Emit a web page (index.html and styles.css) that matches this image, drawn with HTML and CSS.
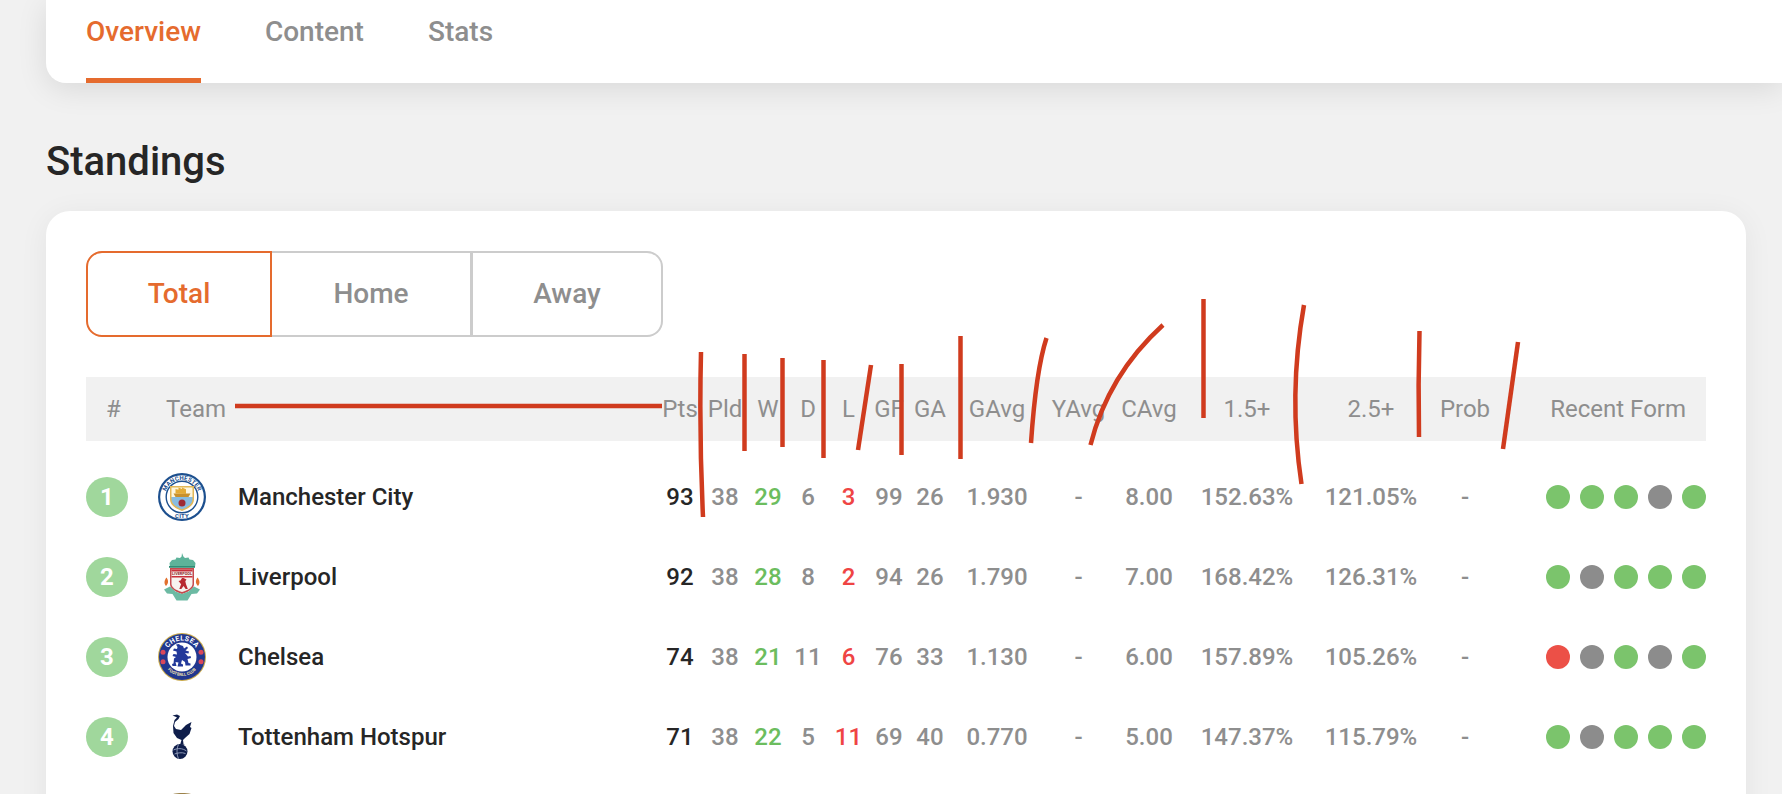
FILE: index.html
```html
<!DOCTYPE html>
<html lang="en">
<head>
    <meta charset="UTF-8">
    <meta name="viewport" content="width=device-width, initial-scale=1.0">
    <title>League Standings</title>
    <link rel="stylesheet" href="styles.css">
</head>
<body>
    <nav class="tabs-card">
        <a class="tab active">Overview</a>
        <a class="tab">Content</a>
        <a class="tab">Stats</a>
    </nav>

    <h1 class="section-title">Standings</h1>

    <section class="standings-card">
        <div class="switcher">
            <button class="switch active">Total</button>
            <button class="switch">Home</button>
            <button class="switch">Away</button>
        </div>

        <table class="standings">
            <colgroup>
                <col class="c-rank"><col class="c-team"><col class="c-pts"><col class="c-pld"><col class="c-sm"><col class="c-sm"><col class="c-l"><col class="c-sm"><col class="c-ga"><col class="c-gavg"><col class="c-yavg"><col class="c-cavg"><col class="c-o15"><col class="c-o25"><col class="c-prob"><col class="c-form">
            </colgroup>
            <thead>
                <tr>
                    <th class="rank-head">#</th>
                    <th class="team-head">Team</th>
                    <th>Pts</th><th>Pld</th><th>W</th><th>D</th><th>L</th><th>GF</th><th>GA</th>
                    <th>GAvg</th><th>YAvg</th><th>CAvg</th><th>1.5+</th><th>2.5+</th><th>Prob</th>
                    <th class="form-head">Recent Form</th>
                </tr>
            </thead>
            <tbody>
                <tr>
                    <td><span class="rank">1</span></td>
                    <td>
                        <div class="team">
                            <svg class="logo" viewBox="0 0 48 48">
                                <defs><path id="mc-top" d="M7 24a17 17 0 0 1 34 0"/></defs>
                                <circle cx="24" cy="24" r="24" fill="#1c4f8e"/>
                                <circle cx="24" cy="24" r="21.800" fill="#fff"/>
                                <circle cx="24" cy="24" r="15.800" fill="none" stroke="#1c4f8e" stroke-width="1.400"/>
                                <text class="crest-text mc"><textPath href="#mc-top" startOffset="50%" text-anchor="middle">MANCHESTER</textPath></text>
                                <text class="crest-text mc" x="24" y="44.500" text-anchor="middle">CITY</text>
                                <path d="M12 13h24v13c0 6-5 9.500-12 12-7-2.500-12-6-12-12z" fill="#e3b857"/>
                                <path d="M13.500 14.500h21v9.500h-21z" fill="#fdf6de"/>
                                <path d="M13.500 24h21v2c0 5-4.500 8-10.500 10.300-6-2.300-10.500-5.300-10.500-10.300z" fill="#88bce0"/>
                                <path d="M15.500 20.500h17l-2 3.500h-13z" fill="#c8902c"/>
                                <path d="M17.500 20.500v-4.500l3 .8v-2.300l3.500 1.500v-1.500l4 1.800v4.700z" fill="#e3ab36"/>
                                <circle cx="24" cy="30" r="3.500" fill="#9e2a33"/>
                            </svg>
                            <span class="team-name">Manchester City</span>
                        </div>
                    </td>
                    <td class="pts">93</td><td>38</td><td class="won">29</td><td>6</td><td class="lost">3</td><td>99</td><td>26</td>
                    <td>1.930</td><td>-</td><td>8.00</td><td>152.63%</td><td>121.05%</td><td>-</td>
                    <td><div class="form"><i class="dot w"></i><i class="dot w"></i><i class="dot w"></i><i class="dot d"></i><i class="dot w"></i></div></td>
                </tr>
                <tr>
                    <td><span class="rank">2</span></td>
                    <td>
                        <div class="team">
                            <svg class="logo" viewBox="0 0 48 48">
                                <path d="M24 0l1.400 3.500 1.600 1.500 3.500-.5 1 2 3.500.5 2.500 3-.5 4h-25l-.5-4 2.500-3 3.500-.5 1-2 3.500.5 1.600-1.500z" fill="#5db39a"/>
                                <path d="M11 13h26v1.800h-26z" fill="#2f8d75"/>
                                <path d="M12 15h24v16c0 4-4 7.500-12 10-8-2.500-12-6-12-10z" fill="#c64a4e"/>
                                <path d="M13.500 16.500h21v14.500c0 3-3.500 6-10.500 8-7-2-10.500-5-10.500-8z" fill="#f7f3ef"/>
                                <path d="M13.500 16.500h21v2h-21zM13.500 23h21v1.500h-21z" fill="#c8303a"/>
                                <text class="crest-text lfc" x="24" y="22.200" text-anchor="middle">LIVERPOOL</text>
                                <path d="M25.500 25l3 1.500-1.200 1.800.7 3 1.800 4.700h-2.200l-2-3-2.300 3h-2l1.800-4.700-1.600-2-1-1.300 2-.5 1.500-2.500z" fill="#b82a30"/>
                                <path d="M8.500 24.500c-2.300 3-2.800 6-.5 8.500 2.500-2.300 2.800-5.500.5-8.500zM39.500 24.500c-2.300 3-2 6.200.5 8.500 2.300-2.500 1.800-5.500-.5-8.500z" fill="#e2702e"/>
                                <path d="M6 36.500l6-3 5.500 5 6.500 2.500 6.500-2.500 5.500-5 6 3-3 4-5.500.5-4 6.500h-11l-4-6.500-5.500-.5z" fill="#6cbaa3"/>
                            </svg>
                            <span class="team-name">Liverpool</span>
                        </div>
                    </td>
                    <td class="pts">92</td><td>38</td><td class="won">28</td><td>8</td><td class="lost">2</td><td>94</td><td>26</td>
                    <td>1.790</td><td>-</td><td>7.00</td><td>168.42%</td><td>126.31%</td><td>-</td>
                    <td><div class="form"><i class="dot w"></i><i class="dot d"></i><i class="dot w"></i><i class="dot w"></i><i class="dot w"></i></div></td>
                </tr>
                <tr>
                    <td><span class="rank">3</span></td>
                    <td>
                        <div class="team">
                            <svg class="logo" viewBox="0 0 48 48">
                                <defs><path id="cfc-top" d="M7.500 24a16.500 16.500 0 0 1 33 0"/><path id="cfc-bot" d="M5 24a19 19 0 0 0 38 0"/></defs>
                                <circle cx="24" cy="24" r="24" fill="#c9a94a"/>
                                <circle cx="24" cy="24" r="23" fill="#21378f"/>
                                <circle cx="24" cy="24" r="14.500" fill="#fff"/>
                                <text class="crest-text cfc"><textPath href="#cfc-top" startOffset="50%" text-anchor="middle">CHELSEA</textPath></text>
                                <text class="crest-text cfc-sm"><textPath href="#cfc-bot" startOffset="50%" text-anchor="middle">FOOTBALL CLUB</textPath></text>
                                <circle cx="5" cy="19.300" r="2.500" fill="#d9475a"/>
                                <circle cx="43" cy="19.300" r="2.500" fill="#d9475a"/>
                                <circle cx="5" cy="28.700" r="2.500" fill="#d9475a"/>
                                <circle cx="43" cy="28.700" r="2.500" fill="#d9475a"/>
                                <path d="M22 12l3 1 1 2.500 3-2 1 1.500-2.500 2.500 3.500 1-.5 2-3.500-.5 3 3.500 2.500-.5.500 2-3.500 1 1 4 2 .5v2h-5l-.5-3.500-3-2-1 3.500 2 1v2h-5.500l1-4-3-.5 1 4h-4l-.5-2 1.500-.5.500-5 2-1.500-3.500-1 1-2 3.500.5-.5-3-3.500-1 1-2 3 .5.500-2-1.500-2.500 3-.5z" fill="#23399a"/>
                            </svg>
                            <span class="team-name">Chelsea</span>
                        </div>
                    </td>
                    <td class="pts">74</td><td>38</td><td class="won">21</td><td>11</td><td class="lost">6</td><td>76</td><td>33</td>
                    <td>1.130</td><td>-</td><td>6.00</td><td>157.89%</td><td>105.26%</td><td>-</td>
                    <td><div class="form"><i class="dot l"></i><i class="dot d"></i><i class="dot w"></i><i class="dot d"></i><i class="dot w"></i></div></td>
                </tr>
                <tr>
                    <td><span class="rank">4</span></td>
                    <td>
                        <div class="team">
                            <svg class="logo" viewBox="0 0 48 48">
                                <path d="M14.500 2.500l4.500-1 3 1.500-1.500 3-3.500 3-1 4 2 3 5 1 5-5 5.500-3-1.500 5 1.500 1-2 6-4.500 4-2 2 .5 4 1.500.5-5 .5 1.500-5-4.500-2-3.500-5-.5-7 1.500-6 2.500-2.500-2-1z" fill="#0f1e4b"/>
                                <circle cx="22" cy="38.500" r="7.500" fill="#0f1e4b"/>
                                <path d="M15.500 37c4-2 9-2 13 1M16.500 41c3-1 7-2 11-.5M20.500 31.500c-2 4-2 10 0 14" fill="none" stroke="#9aa5c2" stroke-width=".9"/>
                            </svg>
                            <span class="team-name">Tottenham Hotspur</span>
                        </div>
                    </td>
                    <td class="pts">71</td><td>38</td><td class="won">22</td><td>5</td><td class="lost">11</td><td>69</td><td>40</td>
                    <td>0.770</td><td>-</td><td>5.00</td><td>147.37%</td><td>115.79%</td><td>-</td>
                    <td><div class="form"><i class="dot w"></i><i class="dot d"></i><i class="dot w"></i><i class="dot w"></i><i class="dot w"></i></div></td>
                </tr>
                <tr>
                    <td></td>
                    <td>
                        <div class="team">
                            <svg class="logo" viewBox="0 0 48 48">
                                <path d="M15 1c5-1.300 13-1.300 18 0l-2 6h-14z" fill="#9c824a"/>
                            </svg>
                        </div>
                    </td>
                    <td colspan="14"></td>
                </tr>
            </tbody>
        </table>
    </section>

    <!-- pen marks drawn on top of the screenshot -->
    <svg class="marks" viewBox="0 0 1782 794">
        <path d="M235 406H662"/>
        <path d="M701 352Q699 433 703 517"/>
        <path d="M744.500 354V451"/>
        <path d="M782.500 358V447"/>
        <path d="M823.500 360V458"/>
        <path d="M871 365L858 450"/>
        <path d="M901.500 364V455"/>
        <path d="M960.500 336V459"/>
        <path d="M1046.500 338Q1036 370 1031 443"/>
        <path d="M1163 325Q1108 375 1090.500 445"/>
        <path d="M1203.500 299V418"/>
        <path d="M1304 305Q1288 395 1301.500 484"/>
        <path d="M1419.500 331Q1418 385 1419 437"/>
        <path d="M1518 342L1503 449"/>
    </svg>
</body>
</html>
```

FILE: styles.css
```css
html, body {
    height: 100%;
}
body {
    margin: 0;
    overflow: hidden;
    position: relative;
    background-color: #f1f1f1;
    color: #262626;
    font-family: Roboto, "Liberation Sans", sans-serif;
}
.tabs-card {
    display: flex;
    gap: 64px;
    height: 83px;
    margin-left: 46px;
    padding-left: 40px;
    box-sizing: border-box;
    background-color: #fff;
    border-bottom-left-radius: 20px;
    box-shadow: 0 6px 30px rgba(0, 0, 0, 0.1);
}
.tab {
    height: 83px;
    box-sizing: border-box;
    padding-top: 16px;
    font-size: 28px;
    line-height: 32px;
    font-weight: 500;
    color: #8e8e8e;
}
.tab.active {
    color: #e56b2e;
    border-bottom: 5px solid #e56b2e;
}
.section-title {
    margin: 59px 0 29px 46px;
    font-size: 40px;
    line-height: 40px;
    font-weight: 500;
}
.standings-card {
    margin: 0 36px 0 46px;
    padding: 40px;
    height: 700px;
    background-color: #fff;
    border-radius: 24px;
    box-shadow: 0 4px 30px rgba(0, 0, 0, 0.06);
}
.switcher {
    display: flex;
    width: 577px;
    height: 86px;
    box-sizing: border-box;
}
.switch {
    padding: 0 0 2px;
    background: #fff;
    border: 2px solid #ccc;
    border-left: 0;
    font-family: inherit;
    font-size: 28px;
    font-weight: 500;
    color: #8e8e8e;
}
.switch:nth-child(1) {
    width: 186px;
    border: 2px solid #e56b2e;
    border-radius: 16px 0 0 16px;
    color: #e56b2e;
}
.switch:nth-child(2) {
    width: 201px;
    border-right: 3px solid #ccc;
}
.switch:nth-child(3) {
    width: 190px;
    border-radius: 0 16px 16px 0;
}
.standings {
    width: 1620px;
    margin-top: 40px;
    table-layout: fixed;
    border-collapse: collapse;
    font-size: 24px;
}
.c-rank { width: 72px; }
.c-team { width: 500px; }
.c-pts { width: 44px; }
.c-pld { width: 46px; }
.c-sm { width: 40px; }
.c-l { width: 41px; }
.c-ga { width: 42px; }
.c-gavg { width: 92px; }
.c-yavg { width: 71px; }
.c-cavg { width: 70px; }
.c-o15 { width: 126px; }
.c-o25 { width: 122px; }
.c-prob { width: 66px; }
.c-form { width: 208px; }
.standings th {
    height: 64px;
    padding: 0;
    background-color: #f1f1f1;
    font-weight: 400;
    color: #8e8e8e;
    white-space: nowrap;
}
.standings th.rank-head {
    padding-left: 20px;
    text-align: left;
}
.standings th.team-head {
    padding-left: 8px;
    text-align: left;
}
.standings th.form-head {
    padding-right: 20px;
    text-align: right;
}
.standings td {
    height: 80px;
    padding: 0;
    text-align: center;
    font-weight: 500;
    color: #8e8e8e;
    white-space: nowrap;
}
.standings tbody tr:first-child td {
    padding-top: 16px;
}
.standings td.pts {
    color: #262626;
}
.standings td.won {
    color: #6cbd5e;
}
.standings td.lost {
    color: #ef4444;
}
.rank {
    display: flex;
    align-items: center;
    justify-content: center;
    width: 42px;
    height: 40px;
    border-radius: 50%;
    background-color: #a0d79c;
    color: #fff;
    font-size: 24px;
    font-weight: 700;
}
.team {
    display: flex;
    align-items: center;
    gap: 32px;
}
.logo {
    width: 48px;
    height: 48px;
    flex-shrink: 0;
}
.team-name {
    color: #262626;
}
.form {
    display: flex;
    justify-content: flex-end;
    gap: 10px;
}
.dot {
    width: 24px;
    height: 24px;
    border-radius: 50%;
}
.dot.w { background-color: #7bc46c; }
.dot.d { background-color: #8c8c8c; }
.dot.l { background-color: #ec5047; }
.crest-text {
    font-family: Roboto, sans-serif;
    font-weight: 700;
}
.crest-text.mc { font-size: 6px; fill: #1c4f8e; letter-spacing: .2px; }
.crest-text.lfc { font-size: 3.8px; fill: #8c1d24; }
.crest-text.cfc { font-size: 7px; fill: #fff; letter-spacing: .4px; }
.crest-text.cfc-sm { font-size: 4.2px; fill: #f2e3b0; }
.marks {
    position: absolute;
    left: 0;
    top: 0;
    width: 1782px;
    height: 794px;
    fill: none;
    stroke: #d03b1e;
    stroke-width: 4.5;
    pointer-events: none;
}
```
